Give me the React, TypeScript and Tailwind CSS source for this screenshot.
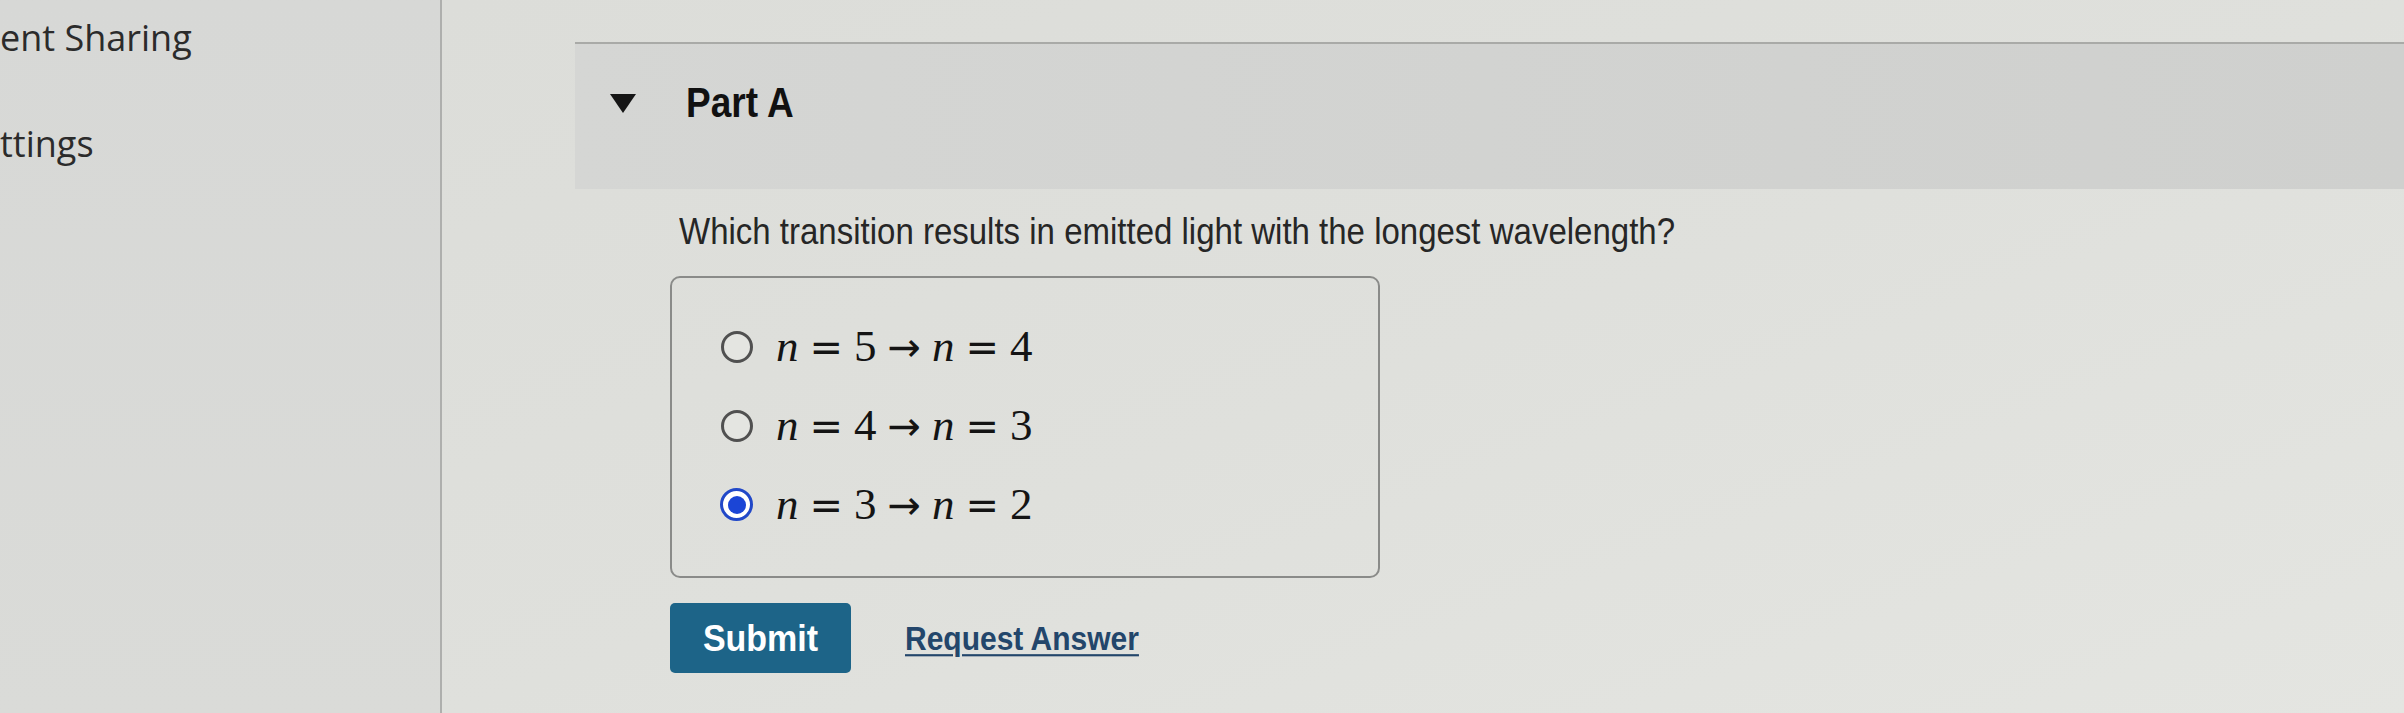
import React from "react";

const Radio = ({ checked }: { checked?: boolean }) =>
  checked ? (
    <span className="flex h-[33px] w-[33px] shrink-0 items-center justify-center rounded-full border-[3px] border-[#2148c8] bg-white">
      <span className="h-[18px] w-[18px] rounded-full bg-[#1b45d6]" />
    </span>
  ) : (
    <span className="h-[32px] w-[32px] shrink-0 rounded-full border-[3px] border-[#505050] bg-[#e4e5e1]" />
  );

const Op = ({ children }: { children: React.ReactNode }) => (
  <span className="mx-[11px] text-[40px] [font-family:'DejaVu_Sans',sans-serif]">{children}</span>
);

const MathRow = ({ a, b, checked }: { a: string; b: string; checked?: boolean }) => (
  <div className="flex h-[79px] items-center">
    <div className="ml-[48px] flex w-[33px] justify-center">
      <Radio checked={checked} />
    </div>
    <div className="ml-[23px] flex items-baseline text-[45px] leading-none text-[#141414] [font-family:'Liberation_Serif',serif]">
      <i>n</i>
      <Op>=</Op>
      <span>{a}</span>
      <Op>→</Op>
      <i>n</i>
      <Op>=</Op>
      <span>{b}</span>
    </div>
  </div>
);

export default function App() {
  return (
    <div className="flex h-[713px] w-[2404px] overflow-hidden bg-[#dcddd9]">
      <aside className="flex h-full w-[442px] shrink-0 flex-col border-r-2 border-[#aeafad] bg-gradient-to-b from-[#d7d8d6] to-[#dadbd8] pt-[14px] text-[36px] leading-[48px] text-[#2b2b2b] [font-family:'Open_Sans',sans-serif]">
        <div>ent Sharing</div>
        <div className="mt-[58px]">ttings</div>
      </aside>
      <main className="flex h-full flex-1 flex-col bg-gradient-to-br from-[#dcddd9] via-[#dfe0dc] to-[#e4e5e1] pl-[133px] [font-family:'Liberation_Sans',Arial,sans-serif]">
        <div className="mt-[42px] flex h-[147px] items-start border-t-2 border-[#a9aaa7] bg-gradient-to-r from-[#d5d6d4] to-[#cfd0ce]">
          <div className="mt-[37px] flex items-center">
            <svg className="ml-[35px]" width="26" height="19" viewBox="0 0 26 19">
              <polygon points="0,0 26,0 13,19" fill="#151515" />
            </svg>
            <span className="ml-[50px] inline-block scale-y-[1.15] text-[37px] font-bold leading-[44px] text-[#111]">Part A</span>
          </div>
        </div>
        <div className="ml-[104px] mt-[23px] scale-y-[1.12] origin-left text-[33px] leading-[40px] text-[#262626]">
          Which transition results in emitted light with the longest wavelength?
        </div>
        <div className="ml-[95px] mt-[24px] h-[302px] w-[710px] rounded-[10px] border-2 border-[#8a8b89] pt-[29px]">
          <MathRow a="5" b="4" />
          <MathRow a="4" b="3" />
          <MathRow a="3" b="2" checked />
        </div>
        <div className="ml-[95px] mt-[25px] flex items-center">
          <button className="flex h-[70px] w-[181px] items-center justify-center rounded-[5px] bg-[#1d6488] text-[34px] font-bold text-white">
            <span className="inline-block scale-y-[1.1]">Submit</span>
          </button>
          <a className="ml-[54px] inline-block scale-y-[1.08] text-[30px] font-bold text-[#23466b] underline decoration-2 underline-offset-4">
            Request Answer
          </a>
        </div>
      </main>
    </div>
  );
}
